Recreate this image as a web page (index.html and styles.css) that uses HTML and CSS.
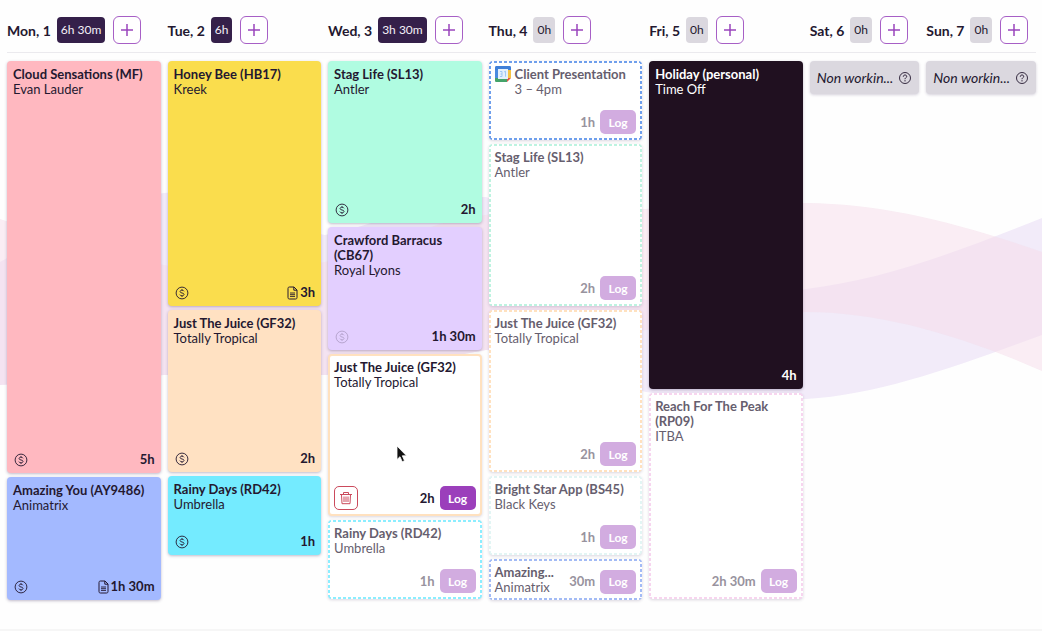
FILE: index.html
```
<!DOCTYPE html>
<html lang="en">

<head>
    <meta charset="UTF-8">
    <meta name="viewport" content="width=device-width, initial-scale=1.0">
    <title>Timesheet</title>
    <link rel="stylesheet" href="styles.css">
</head>

<body>
    <!-- Shared icons -->
    <svg class="sprite" aria-hidden="true">
        <symbol id="plus" viewBox="0 0 14 14">
            <path d="M7 1v12M1 7h12" fill="none" stroke="currentColor" stroke-width="1.5" />
        </symbol>
        <symbol id="billable" viewBox="0 0 14 14">
            <circle cx="7" cy="7" r="5.9" fill="none" stroke="currentColor" stroke-width="0.9" />
            <path d="M9 5.3C8.7 4.6 8 4.2 7 4.2c-1.1 0-1.9.5-1.9 1.4C5.1 7.5 9 6.5 9 8.4c0 .9-.8 1.4-2 1.4-1.1 0-1.8-.4-2.1-1.2M7 3.2v1M7 9.8v1" fill="none" stroke="currentColor" stroke-width="0.9" />
        </symbol>
        <symbol id="note" viewBox="0 0 11 14">
            <path d="M1 2.5C1 1.5 1.5 1 2.5 1H7l3 3v7.5c0 1-.5 1.5-1.5 1.5h-6C1.5 13 1 12.5 1 11.5zM6.8 1v3.2H10" fill="none" stroke="currentColor" stroke-width="1" />
            <path d="M3 7h5M3 8.7h5M3 10.4h5" fill="none" stroke="currentColor" stroke-width="0.9" />
        </symbol>
        <symbol id="help" viewBox="0 0 14 14">
            <circle cx="7" cy="7" r="5.5" fill="none" stroke="currentColor" stroke-width="0.9" />
            <path d="M5.3 5.7c0-1 .7-1.7 1.7-1.7s1.7.6 1.7 1.5C8.7 6.7 7 6.7 7 8.2M7 9.2v1.2" fill="none" stroke="currentColor" stroke-width="1" />
        </symbol>
        <symbol id="trash" viewBox="0 0 14 14">
            <path d="M1 3.5h12M4.5 3.3V1.5h5v1.8M2.5 3.7l.5 9h8l.5-9M5 5.5v5.5M7 5.5v5.5M9 5.5v5.5" fill="none" stroke="currentColor" stroke-width="1" />
        </symbol>
    </svg>

    <main class="planner">
        <!-- Background waves -->
        <svg class="waves" viewBox="0 0 1042 631" preserveAspectRatio="none" aria-hidden="true">
            <path class="wave-violet" d="M0 262C50 235 100 200 164 193C220 190 270 225 325 235C380 225 430 197 486 197C550 220 600 290 646 300C700 302 760 297 806 289C880 280 950 255 1042 218V335C960 365 880 395 806 399C750 402 700 400 646 392C590 380 540 355 486 350C430 360 380 372 325 375H164L0 385Z" />
            <path class="wave-pink" d="M0 219C50 235 100 260 164 265C220 280 280 268 325 262C380 250 430 220 486 215C550 208 600 210 646 209C700 204 760 203 806 203C880 204 950 220 1042 252V371C960 335 880 312 806 312C750 314 700 322 646 330C590 340 540 345 486 350C430 360 380 372 325 375H164L0 385Z" />
        </svg>

        <header class="days">
            <div class="day">
                <h2>Mon, 1</h2><span class="total">6h 30m</span>
                <button class="add" aria-label="Add entry"><svg><use href="#plus" /></svg></button>
            </div>
            <div class="day">
                <h2>Tue, 2</h2><span class="total">6h</span>
                <button class="add" aria-label="Add entry"><svg><use href="#plus" /></svg></button>
            </div>
            <div class="day">
                <h2>Wed, 3</h2><span class="total">3h 30m</span>
                <button class="add" aria-label="Add entry"><svg><use href="#plus" /></svg></button>
            </div>
            <div class="day">
                <h2>Thu, 4</h2><span class="total empty">0h</span>
                <button class="add" aria-label="Add entry"><svg><use href="#plus" /></svg></button>
            </div>
            <div class="day">
                <h2>Fri, 5</h2><span class="total empty">0h</span>
                <button class="add" aria-label="Add entry"><svg><use href="#plus" /></svg></button>
            </div>
            <div class="day">
                <h2>Sat, 6</h2><span class="total empty">0h</span>
                <button class="add" aria-label="Add entry"><svg><use href="#plus" /></svg></button>
            </div>
            <div class="day">
                <h2>Sun, 7</h2><span class="total empty">0h</span>
                <button class="add" aria-label="Add entry"><svg><use href="#plus" /></svg></button>
            </div>
        </header>

        <div class="week">
            <!-- Monday -->
            <section class="column">
                <article class="card pink h5">
                    <h3>Cloud Sensations (MF)</h3>
                    <p>Evan Lauder</p>
                    <footer><svg class="billable"><use href="#billable" /></svg><strong>5h</strong></footer>
                </article>
                <article class="card blue h1-30">
                    <h3>Amazing You (AY9486)</h3>
                    <p>Animatrix</p>
                    <footer><svg class="billable"><use href="#billable" /></svg><svg class="note"><use href="#note" /></svg><strong>1h 30m</strong></footer>
                </article>
            </section>

            <!-- Tuesday -->
            <section class="column">
                <article class="card yellow h3">
                    <h3>Honey Bee (HB17)</h3>
                    <p>Kreek</p>
                    <footer><svg class="billable"><use href="#billable" /></svg><svg class="note"><use href="#note" /></svg><strong>3h</strong></footer>
                </article>
                <article class="card peach h2">
                    <h3>Just The Juice (GF32)</h3>
                    <p>Totally Tropical</p>
                    <footer><svg class="billable"><use href="#billable" /></svg><strong>2h</strong></footer>
                </article>
                <article class="card cyan h1">
                    <h3>Rainy Days (RD42)</h3>
                    <p>Umbrella</p>
                    <footer><svg class="billable"><use href="#billable" /></svg><strong>1h</strong></footer>
                </article>
            </section>

            <!-- Wednesday -->
            <section class="column">
                <article class="card mint h2">
                    <h3>Stag Life (SL13)</h3>
                    <p>Antler</p>
                    <footer><svg class="billable"><use href="#billable" /></svg><strong>2h</strong></footer>
                </article>
                <article class="card lilac h1-30">
                    <h3>Crawford Barracus<br>(CB67)</h3>
                    <p>Royal Lyons</p>
                    <footer><svg class="billable off"><use href="#billable" /></svg><strong>1h 30m</strong></footer>
                </article>
                <article class="card planned active h2">
                    <h3>Just The Juice (GF32)</h3>
                    <p>Totally Tropical</p>
                    <footer>
                        <button class="delete" aria-label="Delete"><svg><use href="#trash" /></svg></button>
                        <strong>2h</strong><button class="log">Log</button>
                    </footer>
                    <svg class="cursor" viewBox="0 0 12 18" aria-hidden="true">
                        <path d="M1 1v13.5l3-2.8 2.2 5 2.3-1-2.2-4.9h4.2z" fill="#111" stroke="#fff" stroke-width="0.8" />
                    </svg>
                </article>
                <article class="card planned cyan-line h1">
                    <h3>Rainy Days (RD42)</h3>
                    <p>Umbrella</p>
                    <footer><strong>1h</strong><button class="log">Log</button></footer>
                </article>
            </section>

            <!-- Thursday -->
            <section class="column">
                <article class="card planned event h1">
                    <svg class="calendar" viewBox="0 0 16 16" aria-hidden="true">
                        <path d="M0 1.5C0 .5.5 0 1.5 0H14.5C15.5 0 16 .5 16 1.5V4H0z" fill="#3f7fd8" />
                        <path d="M0 4h4v8H0z" fill="#4a8bdf" />
                        <path d="M12 4h4v8h-4z" fill="#f5c344" />
                        <path d="M0 12h12v4H1.5C.5 16 0 15.5 0 14.5z" fill="#45a36a" />
                        <path d="M12 12h4l-4 4z" fill="#df5548" />
                        <path d="M3 3h10v10H3z" fill="#e4f1fc" />
                        <path d="M5 5.5h2v5H5M5.5 8H7M9 6l1.5-.8v5.5" fill="none" stroke="#8fbff2" stroke-width="0.8" />
                    </svg>
                    <h3>Client Presentation</h3>
                    <p>3 – 4pm</p>
                    <footer><strong>1h</strong><button class="log">Log</button></footer>
                </article>
                <article class="card planned mint-line h2">
                    <h3>Stag Life (SL13)</h3>
                    <p>Antler</p>
                    <footer><strong>2h</strong><button class="log">Log</button></footer>
                </article>
                <article class="card planned peach-line h2">
                    <h3>Just The Juice (GF32)</h3>
                    <p>Totally Tropical</p>
                    <footer><strong>2h</strong><button class="log">Log</button></footer>
                </article>
                <article class="card planned ice-line h1">
                    <h3>Bright Star App (BS45)</h3>
                    <p>Black Keys</p>
                    <footer><strong>1h</strong><button class="log">Log</button></footer>
                </article>
                <article class="card planned short blue-line h0-30">
                    <div class="text">
                        <h3>Amazing...</h3>
                        <p>Animatrix</p>
                    </div>
                    <footer><strong>30m</strong><button class="log">Log</button></footer>
                </article>
            </section>

            <!-- Friday -->
            <section class="column">
                <article class="card dark h4">
                    <h3>Holiday (personal)</h3>
                    <p>Time Off</p>
                    <footer><strong>4h</strong></footer>
                </article>
                <article class="card planned rose-line h2-30">
                    <h3>Reach For The Peak<br>(RP09)</h3>
                    <p>ITBA</p>
                    <footer><strong>2h 30m</strong><button class="log">Log</button></footer>
                </article>
            </section>

            <!-- Weekend -->
            <section class="column">
                <div class="off-day"><em>Non workin...</em><svg><use href="#help" /></svg></div>
            </section>
            <section class="column">
                <div class="off-day"><em>Non workin...</em><svg><use href="#help" /></svg></div>
            </section>
        </div>
    </main>
</body>

</html>
```
FILE: styles.css
```
* {
    box-sizing: border-box;
}

body {
    margin: 0;
    font-family: Lato, sans-serif;
    font-size: 13px;
    line-height: 15px;
    color: #241830;
    background: #fefefe;
}

h2,
h3,
p {
    margin: 0;
    font-size: inherit;
}

h2 {
    font-size: 14px;
}

button {
    font: inherit;
    padding: 0;
    cursor: pointer;
}

.sprite {
    display: none;
}

.planner {
    position: relative;
    min-height: 100vh;
    padding: 16px 6px 0 7px;
    border-bottom: 2px solid #f6f6f6;
}

.waves {
    position: absolute;
    top: 0;
    left: 0;
    width: 100%;
    height: 631px;
    z-index: -1;
}

.wave-violet {
    fill: #f2ebf9;
}

.wave-pink {
    fill: #f5dcea;
    fill-opacity: 0.5;
}

/* Header and body share the same seven columns */
.days,
.week {
    display: grid;
    grid-template-columns: repeat(5, minmax(0, 7fr)) repeat(2, minmax(0, 5fr));
    column-gap: 7px;
}

.days {
    padding-bottom: 8px;
    border-bottom: 1px solid #ebeaee;
    margin-bottom: 8px;
}

.day {
    display: flex;
    align-items: center;
    white-space: nowrap;
}

.total {
    height: 26px;
    padding: 0 4px;
    margin: 0 8px 0 6px;
    border-radius: 4px;
    font-size: 12px;
    line-height: 26px;
    color: #f4f0f8;
    background: #35204a;
}

.total.empty {
    color: #241830;
    background: #dbd8df;
}

.add {
    display: flex;
    align-items: center;
    justify-content: center;
    width: 28px;
    height: 28px;
    color: #9a45bd;
    background: #fff;
    border: 1px solid #a75fc6;
    border-radius: 6px;
}

.add svg {
    width: 14px;
    height: 14px;
}

.column {
    display: flex;
    flex-direction: column;
    gap: 4px;
}

.card {
    position: relative;
    display: flex;
    flex-direction: column;
    padding: 6px;
    border-radius: 4px;
    box-shadow: 0 1px 3px rgba(50, 30, 80, 0.3);
}

.card footer {
    display: flex;
    align-items: center;
    justify-content: flex-end;
    margin-top: auto;
}

/* Card height follows the logged time */
.h0-30 { height: 41px; }
.h1 { height: 79px; }
.h1-30 { height: 123px; }
.h2 { height: 162px; }
.h2-30 { height: 206px; }
.h3 { height: 245px; }
.h4 { height: 328px; }
.h5 { height: 412px; }

.pink { background: #ffb8c0; }
.blue { background: #a3b9ff; }
.yellow { background: #fadd4d; }
.peach { background: #ffe1c2; }
.cyan { background: #74ebff; }
.mint { background: #b0fce1; }
.lilac { background: #e3cfff; }

.dark {
    color: #fff;
    background: #201020;
}

.billable {
    width: 14px;
    height: 14px;
    margin: 0 auto 0 1px;
}

.billable.off {
    opacity: 0.25;
}

.note {
    width: 11px;
    height: 14px;
    margin-right: 2px;
}

/* Suggested entries that are not logged yet, short dashes on all four sides */
.planned {
    --line: #ffe1bf;
    background:
        repeating-linear-gradient(90deg, var(--line) 0 3px, transparent 3px 5px) top / 100% 2px no-repeat,
        repeating-linear-gradient(90deg, var(--line) 0 3px, transparent 3px 5px) bottom / 100% 2px no-repeat,
        repeating-linear-gradient(var(--line) 0 3px, transparent 3px 5px) left / 2px 100% no-repeat,
        repeating-linear-gradient(var(--line) 0 3px, transparent 3px 5px) right / 2px 100% no-repeat,
        #fff;
    box-shadow: 0 1px 3px rgba(50, 30, 80, 0.18);
}

.planned h3,
.planned p {
    color: #665e6e;
}

.planned strong {
    color: #98939e;
}

.planned.active {
    padding: 4px;
    background: #fff;
    border: 2px solid var(--line);
}

.active h3,
.active p,
.active strong {
    color: #241830;
}

.cyan-line { --line: #8ceeff; }
.event { --line: #6f9fec; }
.mint-line { --line: #bdf3e0; }
.ice-line { --line: #e2f5f4; }
.blue-line { --line: #a3bbf5; }
.rose-line { --line: #f7d5ef; }

.log {
    width: 36px;
    height: 24px;
    margin-left: 5px;
    color: #fff;
    font-size: 12px;
    font-weight: bold;
    background: #d2ace0;
    border: 0;
    border-radius: 5px;
}

.active .log {
    background: #9b3fbb;
}

.delete {
    display: flex;
    align-items: center;
    justify-content: center;
    width: 24px;
    height: 24px;
    margin-right: auto;
    color: #cb4a5c;
    background: #fff;
    border: 1px solid #cb4a5c;
    border-radius: 5px;
}

.delete svg {
    width: 14px;
    height: 14px;
}

.event {
    padding-left: 26px;
}

.calendar {
    position: absolute;
    top: 5px;
    left: 6px;
    width: 16px;
    height: 16px;
}

.short {
    flex-direction: row;
    align-items: center;
}

.short .text {
    flex: 1;
}

.short footer {
    margin: 4px 0 0;
}

.cursor {
    position: absolute;
    top: 89px;
    left: 66px;
    width: 12px;
    height: 18px;
}

.off-day {
    display: flex;
    align-items: center;
    justify-content: space-between;
    height: 33px;
    padding: 0 7px;
    font-size: 14px;
    white-space: nowrap;
    background: #dbd8df;
    border-radius: 4px;
    box-shadow: 0 1px 3px rgba(50, 30, 80, 0.2);
}

.off-day svg {
    width: 14px;
    height: 14px;
}
```
